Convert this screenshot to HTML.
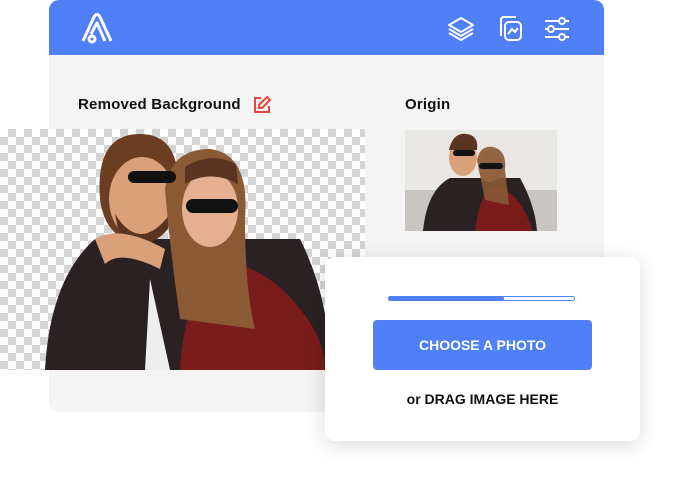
<!DOCTYPE html>
<html><head><style>
*{margin:0;padding:0;box-sizing:border-box}
body{width:676px;height:479px;background:#fff;position:relative;overflow:hidden;font-family:"Liberation Sans",sans-serif}
.hdr{position:absolute;left:49px;top:0;width:555px;height:55px;background:#4f80f7;border-radius:10px 10px 0 0}
.panel{position:absolute;left:49px;top:55px;width:555px;height:357px;background:#f4f4f4;border-radius:0 0 10px 10px}
.lbl{position:absolute;font-weight:bold;font-size:15px;letter-spacing:0.2px;color:#111}
.checker{position:absolute;left:0;top:129px;width:365px;height:241px;
background-color:#fff;background-image:linear-gradient(45deg,#d4d4d4 25%,transparent 25%,transparent 75%,#d4d4d4 75%),linear-gradient(45deg,#d4d4d4 25%,transparent 25%,transparent 75%,#d4d4d4 75%);background-size:16px 16px;background-position:0 0,8px 8px}
.card{position:absolute;left:325px;top:257px;width:315px;height:184px;background:#fff;border-radius:10px;box-shadow:0 4px 20px rgba(0,0,0,.15)}
.btn{position:absolute;left:48px;top:63px;width:219px;height:50px;background:#4f80f7;border-radius:4px;color:#fff;font-weight:bold;font-size:14px;text-align:center;line-height:50px}
</style></head><body>
<div class="hdr">
<svg style="position:absolute;left:30px;top:12px" width="36" height="32" viewBox="0 0 36 32" fill="none" stroke="#fff" stroke-width="3" stroke-linejoin="round"><path d="M4 29 L15 5 Q18 0 21 5 L32 29"/><path d="M12 22 L18 11 L26 29"/><circle cx="13" cy="27" r="3"/></svg>
<svg style="position:absolute;left:398px;top:16px" width="28" height="26" viewBox="0 0 28 26" fill="none" stroke="#fff" stroke-width="2" stroke-linejoin="round"><path d="M14 2 L26 9 L14 16 L2 9 Z"/><path d="M2 13 L14 20 L26 13"/><path d="M2 17 L14 24 L26 17"/></svg>
<svg style="position:absolute;left:447px;top:15px" width="28" height="28" viewBox="0 0 28 28" fill="none" stroke="#fff" stroke-width="2"><path d="M5 21 V5 Q5 2 8 2 H20"/><rect x="9" y="7" width="16" height="18" rx="4"/><path d="M12 19 L16 14 L19 17 L22 13"/></svg>
<svg style="position:absolute;left:494px;top:16px" width="28" height="26" viewBox="0 0 28 26" fill="none" stroke="#fff" stroke-width="2"><path d="M2 5H26M2 13H26M2 21H26"/><circle cx="19" cy="5" r="3" fill="#4f80f7"/><circle cx="8" cy="13" r="3" fill="#4f80f7"/><circle cx="19" cy="21" r="3" fill="#4f80f7"/></svg>
</div>
<div class="panel"></div>
<div class="lbl" style="left:78px;top:96px">Removed Background</div>
<svg style="position:absolute;left:252px;top:95px" width="20" height="20" viewBox="0 0 20 20" fill="none" stroke="#e8453c" stroke-width="2"><path d="M9 3H3V17H17V11"/><path d="M15 2L18 5L10 13H7V10Z"/></svg>
<div class="lbl" style="left:405px;top:96px">Origin</div>
<div class="checker"></div>
<svg style="position:absolute;left:0;top:129px" width="365" height="241" viewBox="0 0 365 241">
<path d="M45 241 Q50 150 95 110 L300 110 Q330 170 330 241Z" fill="#2a2222"/>
<path d="M180 241 Q185 160 220 130 Q270 140 300 180 Q325 210 325 241Z" fill="#7a1c1c"/>
<path d="M100 70 Q95 5 140 5 Q180 5 178 60 Q175 110 140 115 Q105 110 100 70Z" fill="#6b3e22"/>
<ellipse cx="142" cy="70" rx="33" ry="42" fill="#d9a07a"/>
<path d="M115 85 Q140 125 170 85 L168 100 Q142 130 118 100Z" fill="#5a3420"/>
<path d="M165 60 Q170 20 210 20 Q250 25 245 90 Q245 160 255 200 L180 190 Q170 120 165 60Z" fill="#8a5a35"/>
<ellipse cx="210" cy="80" rx="28" ry="38" fill="#e5b092"/>
<path d="M185 55 Q210 40 238 55 L236 35 Q210 22 185 38Z" fill="#5a3420"/>
<rect x="128" y="42" width="48" height="12" rx="6" fill="#111"/>
<rect x="186" y="70" width="52" height="14" rx="7" fill="#111"/>
<path d="M150 150 L170 241 L145 241Z" fill="#eee"/>
<path d="M95 110 Q120 95 165 120 L160 140 Q120 120 105 135Z" fill="#d9a07a"/>
</svg>
<svg style="position:absolute;left:405px;top:130px" width="152" height="101" viewBox="0 0 152 101">
<rect width="152" height="101" fill="#e9e7e4"/><rect y="60" width="152" height="41" fill="#c9c6c2"/>
<path d="M18 101 Q22 60 45 48 L115 48 Q130 75 132 101Z" fill="#2a2222"/>
<path d="M70 101 Q75 60 90 55 Q115 62 128 101Z" fill="#7a1c1c"/>
<ellipse cx="58" cy="28" rx="14" ry="18" fill="#d9a07a"/>
<path d="M44 20 Q48 2 62 4 Q74 6 72 20Z" fill="#5a3420"/>
<ellipse cx="85" cy="36" rx="12" ry="16" fill="#e5b092"/>
<path d="M72 30 Q75 15 88 17 Q102 20 100 40 L104 75 L80 70Z" fill="#8a5a35" opacity=".9"/>
<rect x="48" y="20" width="22" height="6" rx="3" fill="#111"/><rect x="74" y="33" width="24" height="6" rx="3" fill="#111"/>
</svg>
<div class="card">
<div style="position:absolute;left:63px;top:39px;width:187px;height:5px;border:1px solid #4f80f7;border-radius:3px"></div>
<div style="position:absolute;left:63px;top:39px;width:116px;height:5px;background:#4f80f7;border-radius:3px"></div>
<div class="btn">CHOOSE A PHOTO</div>
<div style="position:absolute;left:0;width:315px;top:134px;text-align:center;font-weight:bold;font-size:14px;color:#111">or DRAG IMAGE HERE</div>
</div>
</body></html>
